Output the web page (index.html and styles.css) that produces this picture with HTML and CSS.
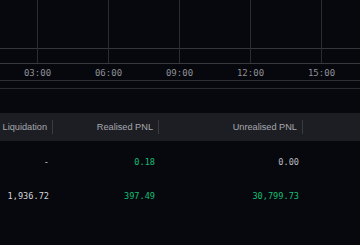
FILE: index.html
```html
<!DOCTYPE html>
<html>
<head>
<meta charset="utf-8">
<link rel="stylesheet" href="styles.css">
</head>
<body>
<div class="chart">
  <div class="plot">
    <div class="gcol first"></div>
    <div class="gcol"></div>
    <div class="gcol"></div>
    <div class="gcol"></div>
    <div class="gcol last"></div>
  </div>
  <div class="axis">
    <span class="tick">03:00</span>
    <span class="tick">06:00</span>
    <span class="tick">09:00</span>
    <span class="tick">12:00</span>
    <span class="tick">15:00</span>
  </div>
  <div class="band"></div>
</div>
<div class="table">
  <div class="thead">
    <div class="th c1"><span>Liquidation</span></div>
    <div class="th c2"><span>Realised PNL</span></div>
    <div class="th c3"><span>Unrealised PNL</span></div>
    <div class="th c4"></div>
  </div>
  <div class="tbody">
    <div class="tr">
      <div class="td c1 light">-</div>
      <div class="td c2 green">0.18</div>
      <div class="td c3 grey">0.00</div>
      <div class="td c4"></div>
    </div>
    <div class="tr">
      <div class="td c1 light">1,936.72</div>
      <div class="td c2 green">397.49</div>
      <div class="td c3 green">30,799.73</div>
      <div class="td c4"></div>
    </div>
  </div>
</div>
</body>
</html>
```
FILE: styles.css
```css
* { box-sizing: border-box; }
html, body {
  margin: 0;
  padding: 0;
  background: #07080d;
  width: 360px;
  height: 245px;
  overflow: hidden;
}
.chart {
  height: 113px;
}
.plot {
  display: flex;
  height: 64px;
  border-bottom: 1px solid #38393e;
  background: linear-gradient(to bottom, transparent 48px, #35363b 48px, #35363b 49px, transparent 49px);
}
.gcol {
  width: 71px;
  height: 63px;
  border-right: 1px solid #2b2c31;
}
.gcol.first { width: 38px; }
.gcol.last { width: 71px; }
.axis {
  display: flex;
  height: 17px;
  padding-left: 2px;
  border-bottom: 1px solid #2e2f34;
  align-items: center;
}
.tick {
  width: 71px;
  text-align: center;
  font-family: "DejaVu Sans Mono", monospace;
  font-size: 9px;
  color: #8e9095;
  letter-spacing: 0;
  padding-top: 1px;
}
.band {
  height: 8px;
  border-bottom: 1px solid #2a2b30;
}
.thead {
  display: flex;
  height: 28px;
  background: #1d1e23;
}
.th {
  display: flex;
  align-items: center;
  justify-content: flex-end;
  font-family: "Liberation Sans", Arial, sans-serif;
  font-size: 9.2px;
  color: #a6a8ae;
}
.th span { padding-right: 5px; }
.th.c1::after, .th.c2::after, .th.c3::after {
  content: "";
  display: block;
  width: 1px;
  height: 14px;
  background: #3a3b40;
}
.c1 { width: 53px; }
.c2 { width: 106px; }
.c3 { width: 144px; }
.c4 { flex: 1; }
.tbody { padding-top: 4px; }
.tr {
  display: flex;
  height: 34px;
  align-items: center;
}
.td {
  text-align: right;
  padding-right: 4px;
  font-family: "DejaVu Sans Mono", monospace;
  font-size: 8.6px;
}
.td.c4 { padding: 0; }
.light { color: #d3d5d9; }
.grey { color: #b9bbc0; }
.green { color: #14bd74; }
```
